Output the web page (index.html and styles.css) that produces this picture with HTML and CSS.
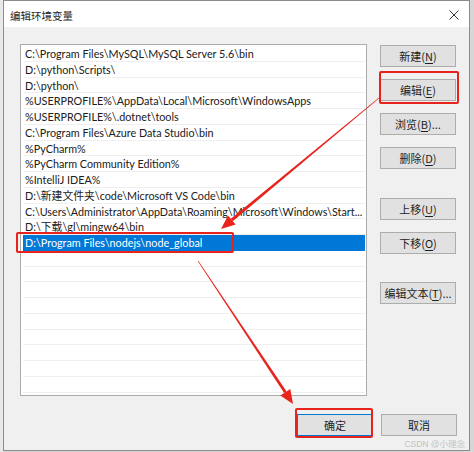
FILE: index.html
```html
<!DOCTYPE html>
<html lang="zh-CN">
<head>
<meta charset="utf-8">
<title>编辑环境变量</title>
<link rel="stylesheet" href="styles.css">
</head>
<body>
<div class="screen">
  <div class="dialog">
    <div class="titlebar">
      <span class="title">编辑环境变量</span>
      <svg class="close" width="10" height="10" viewBox="0 0 10 10">
        <path d="M0.5 0.5 L9.5 9.5 M9.5 0.5 L0.5 9.5" stroke="#333" stroke-width="1" fill="none"/>
      </svg>
    </div>
    <div class="content">
      <div class="main">
        <div class="list">
          <div class="rows">
            <div class="row">C:\Program Files\MySQL\MySQL Server 5.6\bin</div>
            <div class="row">D:\python\Scripts\</div>
            <div class="row">D:\python\</div>
            <div class="row">%USERPROFILE%\AppData\Local\Microsoft\WindowsApps</div>
            <div class="row">%USERPROFILE%\.dotnet\tools</div>
            <div class="row">C:\Program Files\Azure Data Studio\bin</div>
            <div class="row">%PyCharm%</div>
            <div class="row">%PyCharm Community Edition%</div>
            <div class="row">%IntelliJ IDEA%</div>
            <div class="row">D:\新建文件夹\code\Microsoft VS Code\bin</div>
            <div class="row">C:\Users\Administrator\AppData\Roaming\Microsoft\Windows\Start...</div>
            <div class="row">D:\下载\gl\mingw64\bin</div>
            <div class="row selected">D:\Program Files\nodejs\node_global</div>
          </div>
        </div>
        <div class="side">
          <div class="group">
            <button class="btn">新建(<u>N</u>)</button>
            <button class="btn">编辑(<u>E</u>)</button>
            <button class="btn">浏览(<u>B</u>)...</button>
            <button class="btn">删除(<u>D</u>)</button>
          </div>
          <div class="group">
            <button class="btn">上移(<u>U</u>)</button>
            <button class="btn">下移(<u>O</u>)</button>
          </div>
          <div class="group">
            <button class="btn">编辑文本(<u>T</u>)...</button>
          </div>
        </div>
      </div>
      <div class="footer">
        <button class="btn default">确定</button>
        <button class="btn">取消</button>
      </div>
    </div>
    <div class="watermark">CSDN @小理念</div>
  </div>

  <!-- annotation layer: highlight frames and arrows -->
  <div class="mark mark-edit"></div>
  <div class="mark mark-row"></div>
  <div class="mark mark-ok"></div>
  <svg class="arrows" width="474" height="452" viewBox="0 0 474 452">
    <polygon fill="#e8231c" points="379.2,98.2 232.8,221.2 230.8,218.8 378.8,97.8"/>
    <polygon fill="#e8231c" points="221,229 235.6,224.6 228,215.4"/>
    <polygon fill="#e8231c" points="198.3,260.8 286.6,391.5 284.1,393.1 197.8,261.2"/>
    <polygon fill="#e8231c" points="293,404 290.3,389 280.3,395.6"/>
  </svg>
</div>
</body>
</html>
```

FILE: styles.css
```css
html, body {
  margin: 0;
  padding: 0;
}

body {
  width: 474px;
  height: 452px;
  overflow: hidden;
  background: #dedede;
  font-family: "Lato", "Noto Sans CJK SC", sans-serif;
  color: #1a1a1a;
}

.screen {
  position: relative;
  width: 474px;
  height: 452px;
  display: flex;
  padding-left: 3px;
  box-sizing: border-box;
  background: linear-gradient(to right, #e9e9e9 0, #e9e9e9 3px, #d6d6d6 3px);
}

.dialog {
  position: relative;
  width: 467px;
  height: 451px;
  box-sizing: border-box;
  border: 1px solid #8c8c8c;
  display: flex;
  flex-direction: column;
  background: #f0f0f0;
}

.titlebar {
  height: 26px;
  background: #ffffff;
  display: flex;
  align-items: center;
  justify-content: space-between;
  padding: 0 10px 0 6px;
  flex: none;
}

.title {
  font-family: "Noto Sans CJK SC", sans-serif;
  font-size: 10.5px;
  color: #1e1e1e;
  padding-top: 2px;
}

.close {
  display: block;
  margin-top: 2px;
}

.content {
  flex: 1;
  padding: 17px 12px 0 16px;
  display: flex;
  flex-direction: column;
}

.main {
  display: flex;
  gap: 13px;
}

.list {
  width: 347px;
  height: 352px;
  box-sizing: border-box;
  border: 1px solid #ababab;
  background: #ffffff;
  padding: 1px 1px 0 2px;
  overflow: hidden;
}

.rows {
  height: 100%;
  background-image: repeating-linear-gradient(
    to bottom,
    transparent 0,
    transparent 14.75px,
    #efefef 14.75px,
    #efefef 15.75px
  );
}

.row {
  height: 15.75px;
  line-height: 15.75px;
  padding-left: 2px;
  font-size: 10.8px;
  white-space: nowrap;
  overflow: hidden;
  font-family: "Lato", "Noto Sans CJK SC", sans-serif;
  color: #202020;
}

.row.selected {
  background: #0078d7;
  color: #ffffff;
}

.side {
  width: 76px;
  padding-top: 1px;
  display: flex;
  flex-direction: column;
  gap: 29px;
}

.group {
  display: flex;
  flex-direction: column;
  gap: 12px;
}

.group + .group + .group {
  margin-top: -1px;
}

.btn {
  width: 76px;
  height: 22px;
  box-sizing: border-box;
  border: 1px solid #adadad;
  background: #e1e1e1;
  font-family: "Noto Sans CJK SC", sans-serif;
  font-size: 11px;
  color: #1e1e1e;
  padding: 0;
  display: flex;
  align-items: center;
  justify-content: center;
}

.btn u {
  text-decoration-thickness: 1px;
  text-underline-offset: 2px;
}

.btn.default {
  border-color: #0078d7;
}

.footer {
  margin-top: 18px;
  display: flex;
  justify-content: flex-end;
  gap: 8px;
}

.watermark {
  position: absolute;
  right: 4px;
  bottom: 1px;
  font-family: "Liberation Sans", "Noto Sans CJK SC", sans-serif;
  font-size: 8.5px;
  color: #c2c2c2;
}

/* red highlight frames drawn over the dialog */
.mark {
  position: absolute;
  box-sizing: border-box;
  border: 2.5px solid #e8231c;
  border-radius: 2px;
}

.mark-edit {
  left: 379px;
  top: 71px;
  width: 80px;
  height: 33px;
}

.mark-row {
  left: 16px;
  top: 232px;
  width: 218px;
  height: 21px;
}

.mark-ok {
  left: 295px;
  top: 408px;
  width: 78px;
  height: 30px;
}

.arrows {
  position: absolute;
  left: 0;
  top: 0;
  pointer-events: none;
}
```
